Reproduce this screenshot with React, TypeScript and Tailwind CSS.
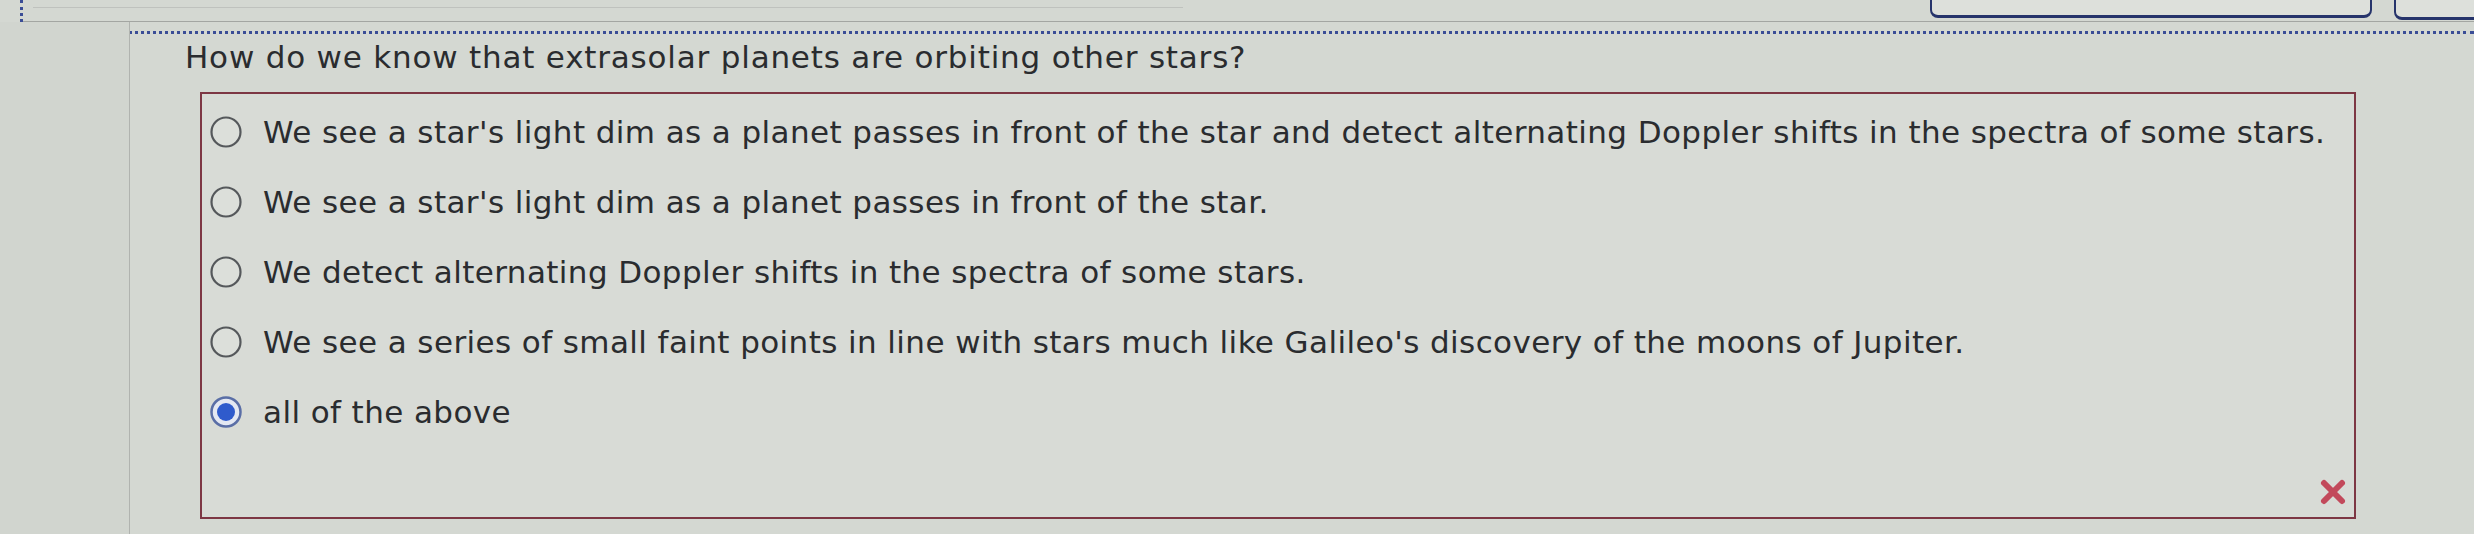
import React from "react";

const options = [
  "We see a star's light dim as a planet passes in front of the star and detect alternating Doppler shifts in the spectra of some stars.",
  "We see a star's light dim as a planet passes in front of the star.",
  "We detect alternating Doppler shifts in the spectra of some stars.",
  "We see a series of small faint points in line with stars much like Galileo's discovery of the moons of Jupiter.",
  "all of the above",
];

const selected = 4;

function Radio({ checked }: { checked: boolean }) {
  if (checked) {
    return (
      <svg width="32" height="32" viewBox="0 0 32 32" className="shrink-0">
        <circle cx="16" cy="16" r="14.5" fill="#e4e8f2" stroke="#5a6ea6" strokeWidth="2.5" />
        <circle cx="16" cy="16" r="9" fill="#2f5bcc" />
      </svg>
    );
  }
  return (
    <svg width="32" height="32" viewBox="0 0 32 32" className="shrink-0">
      <circle cx="16" cy="16" r="14.5" fill="#dcdfda" stroke="#55585b" strokeWidth="2.2" />
    </svg>
  );
}

export default function App() {
  return (
    <div className="w-[2474px] h-[534px] overflow-hidden bg-[#d4d8d2] text-[#2a2c2f] font-['DejaVu_Sans',sans-serif]">
      {/* Top toolbar with focus outline */}
      <div className="ml-[20px] h-[34px] border-l-[3px] border-b-[3px] border-dotted border-[#3a4d96]">
        <div className="h-[22px] flex items-start border-b border-[#a3a6a2]">
          <div className="ml-[10px] w-[1150px] h-[8px] border-b border-[#bfc2be]" />
          <div className="ml-auto flex gap-[22px] items-start">
            <div className="w-[442px] h-[18px] bg-[#dde0db] border-x-2 border-b-[3px] border-[#26346b] rounded-b-lg" />
            <div className="w-[80px] h-[20px] bg-[#dde0db] border-l-2 border-b-[3px] border-[#26346b] rounded-bl-lg" />
          </div>
        </div>
      </div>

      <div className="flex h-[500px]">
        {/* Left gutter */}
        <div className="w-[130px] shrink-0 border-r border-[#b0b3af] bg-[#d1d5cf] -mt-[12px]" />

        {/* Question content */}
        <div className="flex-1 pl-[55px] pt-[5px]">
          <p className="text-[31px] leading-[36px] tracking-[0.8px]">
            How do we know that extrasolar planets are orbiting other stars?
          </p>

          <div className="mt-[17px] ml-[15px] w-[2156px] border-2 border-[#7d3744] bg-[#d8dbd6] pl-[8px] pt-[3px] pb-[10px]">
            {options.map((opt, i) => (
              <label key={i} className="h-[70px] flex items-center gap-[21px]">
                <Radio checked={i === selected} />
                <span className="text-[31px] leading-[36px] tracking-[0.4px] whitespace-nowrap">{opt}</span>
              </label>
            ))}
            <div className="mt-[30px] flex justify-end pr-[6px]">
              <svg width="30" height="30" viewBox="0 0 30 30">
                <path d="M6 6 L24 24 M24 6 L6 24" stroke="#c2495b" strokeWidth="6" strokeLinecap="round" />
              </svg>
            </div>
          </div>
        </div>
      </div>
    </div>
  );
}
